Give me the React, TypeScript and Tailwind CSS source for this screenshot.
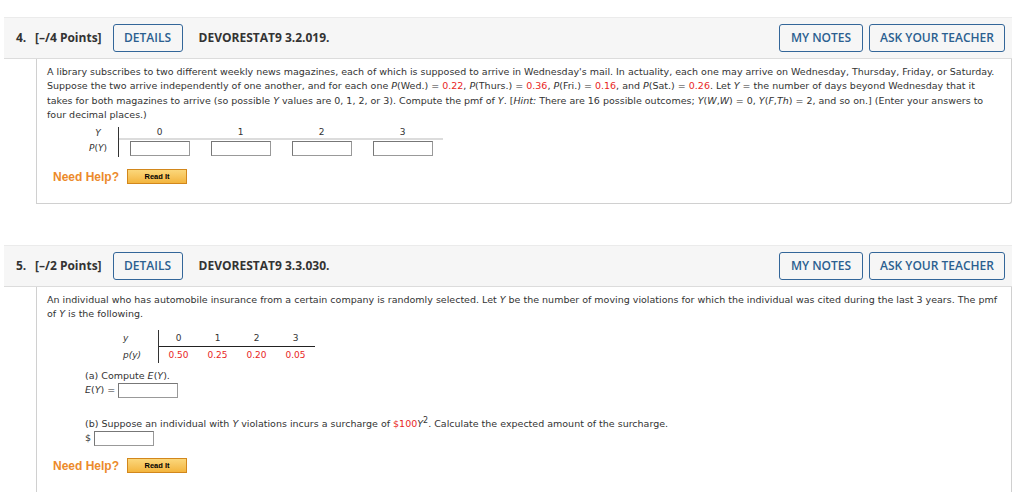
import React from 'react'

const body = { fontFamily: '"DejaVu Sans", Verdana, sans-serif' }
const head = { fontFamily: '"Open Sans", "Noto Sans", sans-serif' }
const help = { fontFamily: '"Liberation Sans", Arial, sans-serif' }

function HeaderBar({ num, points, code }: { num: string; points: string; code: string }) {
  return (
    <div
      className="flex items-center h-[42px] bg-[#f6f6f6] border-t border-t-[#ebebeb] border-b border-b-[#dcdcdc] text-[12px] text-[#333]"
      style={head}
    >
      <span className="ml-[12px] font-bold w-[19px]">{num}</span>
      <span className="font-bold">{points}</span>
      <button className="ml-[11px] h-[28px] w-[70px] rounded-[3px] border-[1.5px] border-[#336699] text-[#2b5f90] font-semibold text-[12px]">
        DETAILS
      </button>
      <span className="ml-[16px] font-bold">{code}</span>
      <div className="ml-auto mr-[7px] flex gap-[6px]">
        <button className="h-[28px] w-[84px] rounded-[3px] border-[1.5px] border-[#336699] text-[#2b5f90] font-semibold text-[12px]">
          MY NOTES
        </button>
        <button className="h-[28px] w-[136px] rounded-[3px] border-[1.5px] border-[#336699] text-[#2b5f90] font-semibold text-[12px]">
          ASK YOUR TEACHER
        </button>
      </div>
    </div>
  )
}

function NeedHelp() {
  return (
    <div className="flex items-center gap-[8px]">
      <span className="text-[12px] font-bold text-[#ec8a2b]" style={help}>
        Need Help?
      </span>
      <button
        className="h-[15px] w-[60px] border border-[#d2871c] bg-gradient-to-b from-[#fbd77a] to-[#f3b53c] text-[7.5px] font-bold text-black leading-none"
        style={help}
      >
        Read It
      </button>
    </div>
  )
}

const R = ({ children }: { children: React.ReactNode }) => <span className="text-[#e8261e]">{children}</span>
const I = ({ children }: { children: React.ReactNode }) => <i>{children}</i>

function Box() {
  return <input className="w-[60px] h-[15px] border border-[#999] border-t-[#777] border-l-[#777] bg-white" />
}

export default function App() {
  return (
    <div className="bg-white w-[1024px] h-[492px] overflow-hidden text-[#333]">
      <div className="ml-[4px] w-[1008px] pt-[17px]">
        <HeaderBar num="4." points="[–/4 Points]" code="DEVORESTAT9 3.2.019." />
        <div className="ml-[32px] h-[145px] border-l border-r border-b border-[#d0d0d0] rounded-br-[3px] pl-[10px] pr-[4px] pt-[6px]" style={body}>
          <p className="text-[9.5px] leading-[14.4px]">
            A library subscribes to two different weekly news magazines, each of which is supposed to arrive in Wednesday's mail. In actuality, each one may arrive on Wednesday, Thursday, Friday, or Saturday.
            <br />
            Suppose the two arrive independently of one another, and for each one <I>P</I>(Wed.) = <R>0.22</R>, <I>P</I>(Thurs.) = <R>0.36</R>, <I>P</I>(Fri.) = <R>0.16</R>, and <I>P</I>(Sat.) = <R>0.26</R>. Let <I>Y</I> = the number of days beyond Wednesday that it
            <br />
            takes for both magazines to arrive (so possible <I>Y</I> values are 0, 1, 2, or 3). Compute the pmf of <I>Y</I>. [<I>Hint:</I> There are 16 possible outcomes; <I>Y</I>(<I>W</I>,<I>W</I>) = 0, <I>Y</I>(<I>F</I>,<I>Th</I>) = 2, and so on.] (Enter your answers to
            <br />
            four decimal places.)
          </p>
          <div className="mt-[4px] ml-[31px] grid grid-cols-[41px_81px_81px_81px_81px] text-[9px]">
            <div className="h-[13px] border-r border-[#333] text-center italic leading-[12px]">Y</div>
            {['0', '1', '2', '3'].map((v) => (
              <div key={v} className="h-[13px] border-b-2 border-[#dcdcdc] text-center leading-[11px]">
                {v}
              </div>
            ))}
            <div className="h-[17px] border-r border-[#333] text-center leading-[17px]">
              <I>P</I>(<I>Y</I>)
            </div>
            {['0', '1', '2', '3'].map((v) => (
              <div key={v} className="h-[17px] flex justify-center pt-[1px]">
                <Box />
              </div>
            ))}
          </div>
          <div className="mt-[11px] ml-[6px]">
            <NeedHelp />
          </div>
        </div>

        <div className="h-[41px]" />

        <HeaderBar num="5." points="[–/2 Points]" code="DEVORESTAT9 3.3.030." />
        <div className="ml-[32px] h-[220px] border-l border-r border-[#d0d0d0] pl-[10px] pr-[4px] pt-[6px]" style={body}>
          <p className="text-[9.5px] leading-[14.4px]">
            An individual who has automobile insurance from a certain company is randomly selected. Let <I>Y</I> be the number of moving violations for which the individual was cited during the last 3 years. The pmf
            <br />
            of <I>Y</I> is the following.
          </p>
          <div className="mt-[8px] ml-[71px] grid grid-cols-[41px_39px_39px_39px_39px] text-[9px]">
            <div className="h-[17px] border-r border-[#333] pl-[5px] italic leading-[16px]">y</div>
            {['0', '1', '2', '3'].map((v) => (
              <div key={v} className="h-[17px] border-b border-[#222] text-center leading-[16px]">
                {v}
              </div>
            ))}
            <div className="h-[16px] border-r border-[#333] pl-[5px] italic leading-[17px]">p(y)</div>
            {['0.50', '0.25', '0.20', '0.05'].map((v) => (
              <div key={v} className="h-[16px] text-center leading-[17px] text-[#e8261e]">
                {v}
              </div>
            ))}
          </div>
          <div className="ml-[38px] mt-[6px] text-[9.5px]">
            <div className="leading-[14px]">
              (a) Compute <I>E</I>(<I>Y</I>).
            </div>
            <div className="flex items-center h-[15px] gap-[3px]">
              <span>
                <I>E</I>(<I>Y</I>) =
              </span>
              <Box />
            </div>
            <div className="mt-[19px] leading-[14px]">
              (b) Suppose an individual with <I>Y</I> violations incurs a surcharge of <R>$100</R>
              <I>Y</I>
              <sup className="text-[8px]">2</sup>. Calculate the expected amount of the surcharge.
            </div>
            <div className="flex items-center h-[15px] gap-[3px]">
              <span>$</span>
              <Box />
            </div>
          </div>
          <div className="mt-[11px] ml-[6px]">
            <NeedHelp />
          </div>
        </div>
      </div>
    </div>
  )
}
